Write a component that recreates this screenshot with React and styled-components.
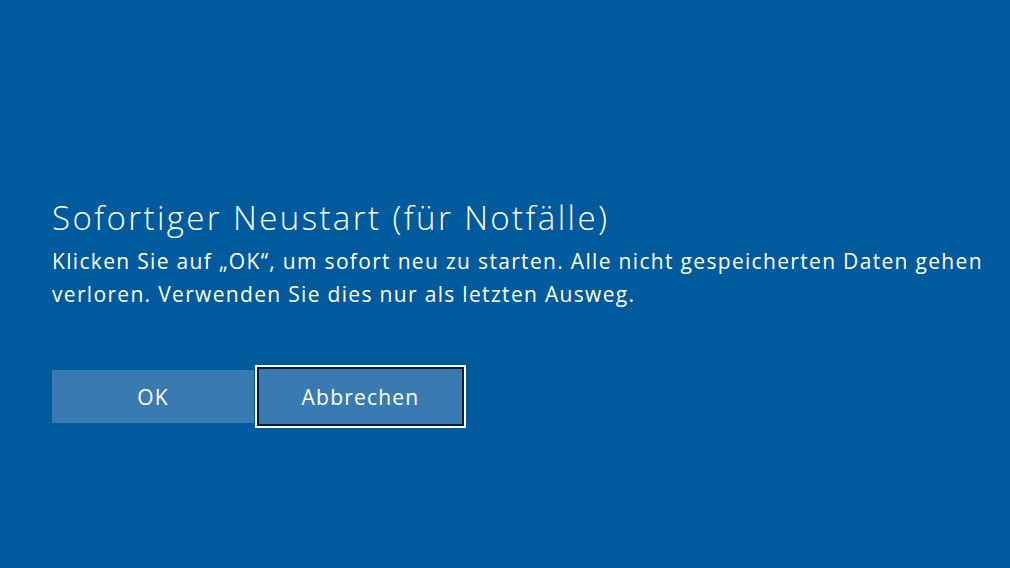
import React from 'react'
import styled, { createGlobalStyle } from 'styled-components'

const GlobalStyle = createGlobalStyle`
  html, body {
    margin: 0;
    padding: 0;
    background: #005a9e;
  }
`

export default function App() {
  return (
    <Screen>
      <GlobalStyle />
      <Dialog>
        <Title>Sofortiger Neustart (für Notfälle)</Title>
        <Message>
          Klicken Sie auf „OK“, um sofort neu zu starten. Alle nicht gespeicherten Daten gehen<br />
          verloren. Verwenden Sie dies nur als letzten Ausweg.
        </Message>
        <Buttons>
          <Button>OK</Button>
          <Button focused>Abbrechen</Button>
        </Buttons>
      </Dialog>
    </Screen>
  )
}

const Screen = styled.div`
  width: 1010px;
  height: 568px;
  background: #005a9e;
  overflow: hidden;
  font-family: "Open Sans", "Noto Sans", sans-serif;
  color: #ffffff;
`

const Dialog = styled.div`
  display: flex;
  flex-direction: column;
  padding: 196px 0 0 52px;
`

const Title = styled.h1`
  margin: 0;
  font-size: 33px;
  font-weight: 300;
  line-height: 44px;
  letter-spacing: 2.4px;
`

const Message = styled.p`
  margin: 5px 0 0;
  width: 950px;
  font-size: 21px;
  font-weight: 400;
  line-height: 33px;
  letter-spacing: 1.32px;
  white-space: nowrap;
`

const Buttons = styled.div`
  display: flex;
  align-items: center;
  margin-top: 54px;
`

const Button = styled.button`
  box-sizing: border-box;
  width: ${p => (p.focused ? '211px' : '202px')};
  height: ${p => (p.focused ? '63px' : '53px')};
  margin-left: ${p => (p.focused ? '1px' : '0')};
  background: #3a7ab3;
  color: #ffffff;
  font-family: "Open Sans", "Noto Sans", sans-serif;
  font-size: 21px;
  letter-spacing: 1.2px;
  border: ${p => (p.focused ? '2px solid #ffffff' : 'none')};
  box-shadow: ${p => (p.focused ? 'inset 0 0 0 2px #0c1e33' : 'none')};
  padding: 0;
  cursor: pointer;
`
